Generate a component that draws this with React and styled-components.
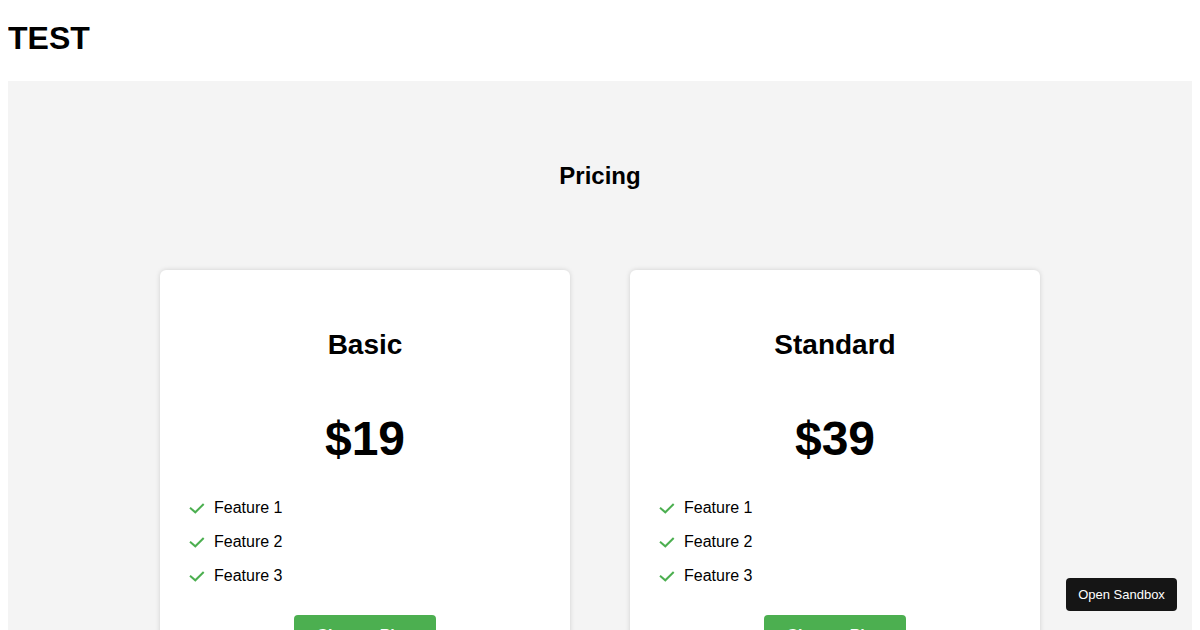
import React from "react"
import styled, { createGlobalStyle } from "styled-components"

const GlobalStyle = createGlobalStyle`
  body {
    margin: 8px;
    font-family: "Liberation Sans", Arial, sans-serif;
    color: #000;
    background: #fff;
  }
`

const PageTitle = styled.h1`
  font-size: 32px;
  font-weight: bold;
  margin: 12px 0 24px;
`

const PricingSection = styled.section`
  background: #f4f4f4;
  padding: 61px 20px 40px;
  text-align: center;
`

const SectionTitle = styled.h2`
  font-size: 24px;
  font-weight: bold;
  margin: 20px 0 80px;
`

const Plans = styled.div`
  display: flex;
  justify-content: center;
  gap: 60px;
`

const PlanCard = styled.div`
  box-sizing: border-box;
  width: 410px;
  background: #fff;
  border-radius: 6px;
  box-shadow: 0 0 5px rgba(0, 0, 0, 0.15);
  padding: 40px 30px;
  text-align: center;
`

const PlanName = styled.h3`
  font-size: 28px;
  font-weight: bold;
  margin: 19px 0 0;
`

const PlanPrice = styled.div`
  font-size: 48px;
  font-weight: bold;
  margin-top: 50px;
`

const FeatureList = styled.ul`
  list-style: none;
  padding: 0;
  margin: 30px 0 0;
  display: flex;
  flex-direction: column;
  gap: 10px;
  text-align: left;
`

const Feature = styled.li`
  display: flex;
  align-items: center;
  gap: 9px;
  font-size: 16px;
  line-height: 24px;

  svg {
    flex: none;
    margin-left: -1px;
  }
`

const ChooseButton = styled.button`
  margin-top: 26.5px;
  background: #4caf50;
  color: #fff;
  border: none;
  border-radius: 4px;
  padding: 12px 23px;
  font-family: inherit;
  font-size: 16px;
  font-weight: bold;
  cursor: pointer;
`

const SandboxButton = styled.button`
  position: fixed;
  right: 23px;
  bottom: 19px;
  width: 111px;
  height: 33px;
  background: #151515;
  color: #fff;
  border: none;
  border-radius: 4px;
  font-family: "Liberation Sans", Arial, sans-serif;
  font-size: 13px;
  padding: 0;
`

const CheckIcon = () => (
  <svg width="16" height="12" viewBox="0 0 16 12">
    <polyline
      points="1,5.7 6.3,10.3 14.7,2"
      fill="none"
      stroke="#4caf50"
      strokeWidth="2"
    />
  </svg>
)

const plans = [
  { name: "Basic", price: "$19", features: ["Feature 1", "Feature 2", "Feature 3"] },
  { name: "Standard", price: "$39", features: ["Feature 1", "Feature 2", "Feature 3"] },
]

export default function App() {
  return (
    <>
      <GlobalStyle />
      <PageTitle>TEST</PageTitle>
      <PricingSection>
        <SectionTitle>Pricing</SectionTitle>
        <Plans>
          {plans.map(plan => (
            <PlanCard key={plan.name}>
              <PlanName>{plan.name}</PlanName>
              <PlanPrice>{plan.price}</PlanPrice>
              <FeatureList>
                {plan.features.map(f => (
                  <Feature key={f}>
                    <CheckIcon />
                    {f}
                  </Feature>
                ))}
              </FeatureList>
              <ChooseButton>Choose Plan</ChooseButton>
            </PlanCard>
          ))}
        </Plans>
      </PricingSection>
      <SandboxButton>Open Sandbox</SandboxButton>
    </>
  )
}
